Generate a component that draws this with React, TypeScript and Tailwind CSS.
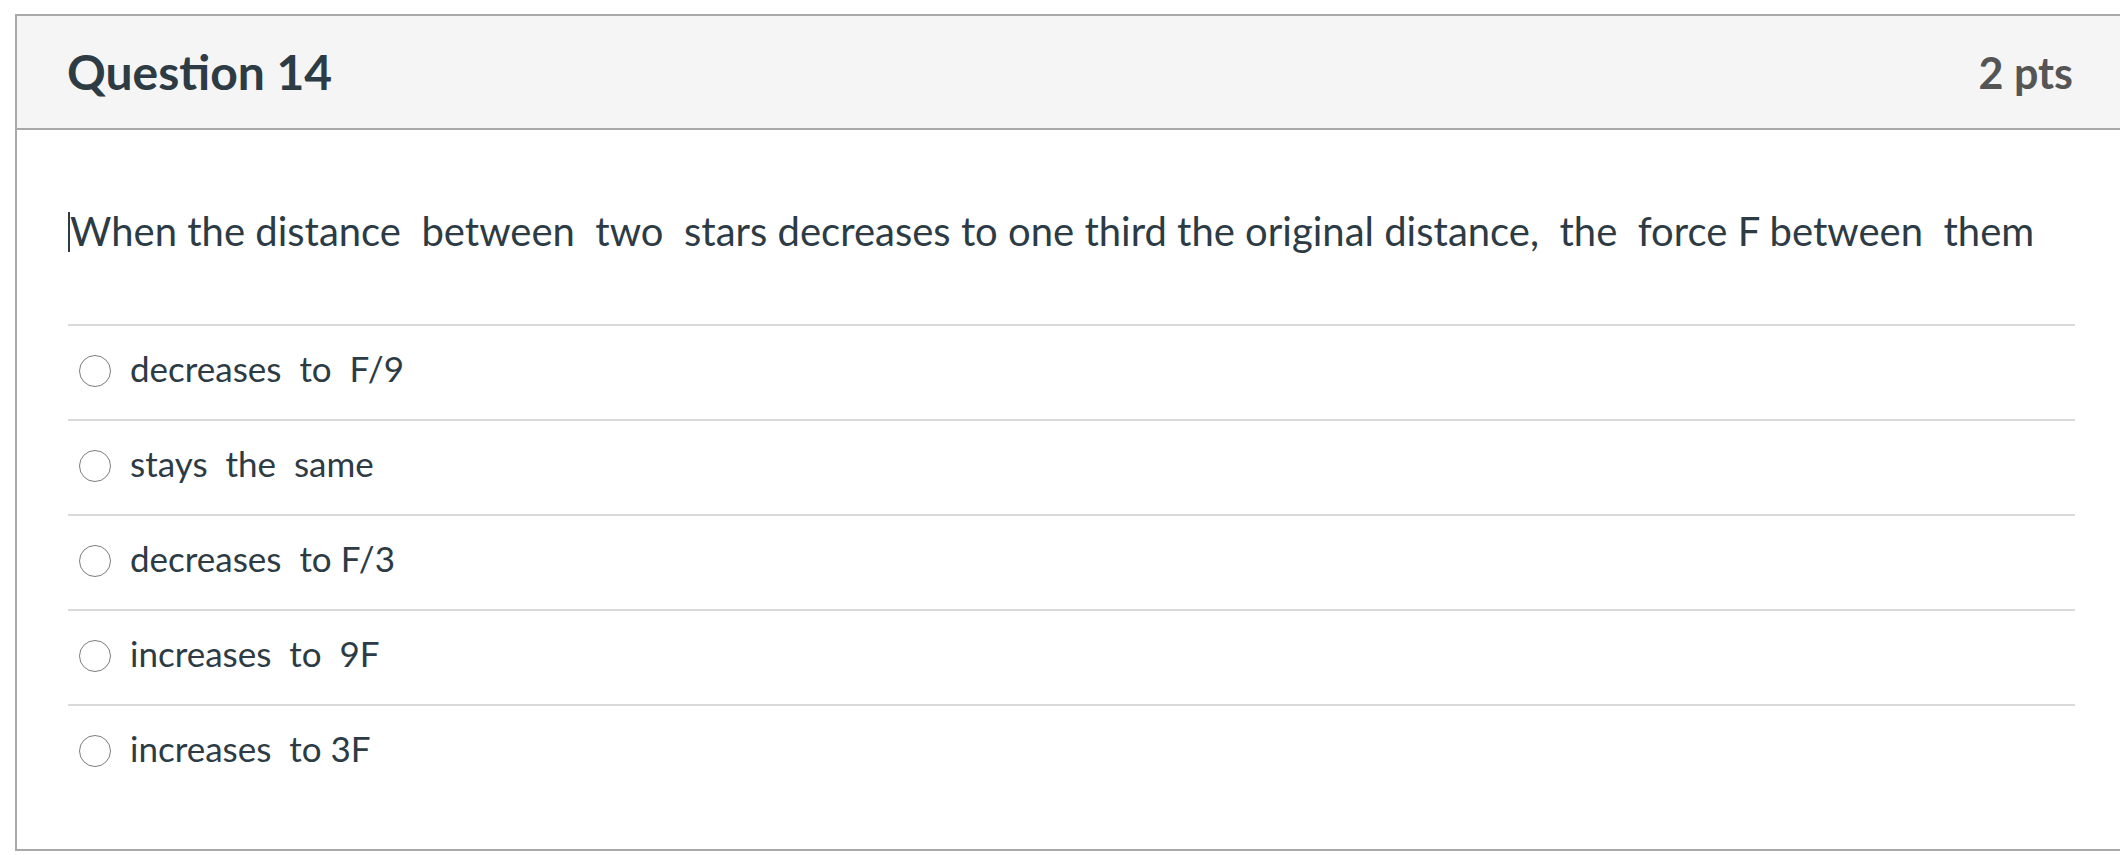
const answers = [
  "decreases  to  F/9",
  "stays  the  same",
  "decreases  to F/3",
  "increases  to  9F",
  "increases  to 3F",
];

export default function App() {
  return (
    <div className="h-screen w-full overflow-hidden bg-white pl-[15px] pt-[14px] font-['Lato',sans-serif]">
      <div className="flex h-[837px] flex-col border-y-2 border-l-2 border-[#a9a9a9]">
        {/* Header */}
        <div className="flex h-[114px] shrink-0 items-center justify-between border-b-2 border-[#a9a9a9] bg-[#f5f5f5] pl-[50px] pr-[47px]">
          <h2 className="text-[48px] leading-none font-bold text-[#2d3b45]">Question 14</h2>
          <span className="text-[43px] leading-none font-bold text-[#555555]">2 pts</span>
        </div>

        {/* Body */}
        <div className="pl-[51px] pr-[45px] pt-[71px]">
          <p className="whitespace-pre text-[40px] leading-[60px] text-[#2d3b45]">
            <span className="inline-block h-[40px] w-[2px] translate-y-[6px] bg-[#2d3b45] align-baseline" />
            {"When the distance  between  two  stars decreases to one third the original distance,  the  force F between  them"}
          </p>

          <div className="mt-[63px]">
            {answers.map((a) => (
              <div
                key={a}
                className="flex h-[95px] items-center border-t-2 border-[#dadada] pb-[8px] pl-[11px]"
              >
                <span className="h-[32px] w-[32px] shrink-0 translate-y-[2px] rounded-full border-[1.5px] border-[#7d7d7d] bg-white" />
                <span className="ml-[19px] whitespace-pre text-[35px] leading-none text-[#2d3b45]">{a}</span>
              </div>
            ))}
          </div>
        </div>
      </div>
    </div>
  );
}
